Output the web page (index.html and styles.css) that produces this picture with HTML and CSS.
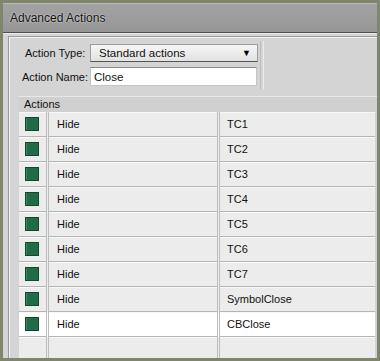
FILE: index.html
```html
<!DOCTYPE html>
<html>
    <head>
        <meta charset="utf-8">
        <link rel="stylesheet" href="styles.css">
        <title>Advanced Actions</title>
    </head>
    <body>
        <div class="window">
            <div class="titlebar">Advanced Actions</div>
            <div class="client">
                <div class="panel">
                    <div class="top">
                        <div class="fields">
                            <div class="field">
                                <label class="type-label">Action Type:</label>
                                <div class="select">
                                    <span>Standard actions</span>
                                    <span class="arrow">&#9660;</span>
                                </div>
                            </div>
                            <div class="field">
                                <label class="name-label">Action Name:</label>
                                <div class="input">Close</div>
                            </div>
                        </div>
                        <div class="grip"></div>
                    </div>
                    <div class="actions-head">Actions</div>
                    <table class="grid">
                        <tr><td class="c1"><span class="chk"></span></td><td class="c2">Hide</td><td class="c3">TC1</td></tr>
                        <tr><td class="c1"><span class="chk"></span></td><td class="c2">Hide</td><td class="c3">TC2</td></tr>
                        <tr><td class="c1"><span class="chk"></span></td><td class="c2">Hide</td><td class="c3">TC3</td></tr>
                        <tr><td class="c1"><span class="chk"></span></td><td class="c2">Hide</td><td class="c3">TC4</td></tr>
                        <tr><td class="c1"><span class="chk"></span></td><td class="c2">Hide</td><td class="c3">TC5</td></tr>
                        <tr><td class="c1"><span class="chk"></span></td><td class="c2">Hide</td><td class="c3">TC6</td></tr>
                        <tr><td class="c1"><span class="chk"></span></td><td class="c2">Hide</td><td class="c3">TC7</td></tr>
                        <tr><td class="c1"><span class="chk"></span></td><td class="c2">Hide</td><td class="c3">SymbolClose</td></tr>
                        <tr class="current"><td class="c1"><span class="chk"></span></td><td class="c2">Hide</td><td class="c3">CBClose</td></tr>
                        <tr class="empty"><td class="c1"></td><td class="c2"></td><td class="c3"></td></tr>
                    </table>
                </div>
            </div>
        </div>
    </body>
</html>
```
FILE: styles.css
```css
body {
  margin: 0;
  padding: 0;
  font-family: "Liberation Sans", Arial, sans-serif;
  font-size: 11px;
  color: #111;
}

.window {
  width: 380px;
  height: 361px;
  box-sizing: border-box;
  border: 3px solid #7e876c;
  background: #d4d4d4;
  display: flex;
  flex-direction: column;
  overflow: hidden;
}

.titlebar {
  height: 28px;
  line-height: 29px;
  padding-left: 7px;
  font-size: 12px;
  color: #111;
  text-shadow: 0 0 2px #eee;
  background: linear-gradient(#a3a3a3, #969696);
  border-top: 1px solid #b8b8b8;
  border-bottom: 1px solid #4e4e4e;
}

.client {
  flex: 1;
  padding: 2px 0 0 5px;
  border-top: 1px solid #ececec;
}

.panel {
  height: 100%;
  border-left: 1px solid #9a9a9a;
  border-top: 1px solid #9a9a9a;
  padding: 4px 0 0 2px;
  box-shadow: inset 1px 1px 0 #f2f2f2;
}

.top {
  display: flex;
  align-items: flex-start;
}

.fields {
  display: flex;
  flex-direction: column;
  gap: 1px;
  padding-left: 11px;
}

.grip {
  width: 2px;
  height: 48px;
  margin: 0 0 0 2px;
  border-left: 1px solid #bcbcbc;
  border-right: 1px solid #ececec;
}

.field {
  display: flex;
  align-items: center;
  height: 23px;
}

.type-label {
  width: 68px;
  padding-left: 3px;
  box-sizing: border-box;
}

.name-label {
  width: 68px;
}

.select {
  width: 168px;
  height: 18px;
  box-sizing: border-box;
  display: flex;
  align-items: center;
  justify-content: space-between;
  padding: 0 6px 0 8px;
  background: linear-gradient(#f6f6f6, #e2e2e2);
  border: 1px solid #9c9c9c;
  border-bottom-color: #555;
  font-size: 11.5px;
}

.arrow {
  font-size: 9px;
  color: #000;
}

.input {
  width: 167px;
  height: 19px;
  line-height: 18px;
  box-sizing: border-box;
  padding-left: 3px;
  background: #fff;
  border: 1px solid #c4c4c4;
  border-top-color: #888;
  font-size: 11.5px;
}

.actions-head {
  margin-top: 7px;
  margin-left: 8px;
  height: 15px;
  line-height: 15px;
  padding-left: 5px;
  background: #d0d0d0;
  border-top: 1px solid #e8e8e8;
}

.grid {
  margin-left: 8px;
  width: 356px;
  border-collapse: collapse;
}

.grid td {
  height: 24px;
  padding: 0;
  background: #ececec;
  border-bottom: 1px solid #b5b5b5;
  box-shadow: inset 0 1px 0 #f8f8f8;
  font-size: 11px;
}

.grid .c1 {
  width: 27px;
  border-right: 3px double #bdbdbd;
}

.grid .c2 {
  width: 160px;
  padding-left: 8px;
  border-right: 3px double #bdbdbd;
}

.grid .c3 {
  padding-left: 7px;
}

.grid .current td {
  background: #fff;
}

.chk {
  display: block;
  width: 12px;
  height: 12px;
  margin-left: 6px;
  background: #226b48;
  border: 1px solid #14452d;
  box-shadow: inset 1px 0 0 #3c8a60;
}
```
